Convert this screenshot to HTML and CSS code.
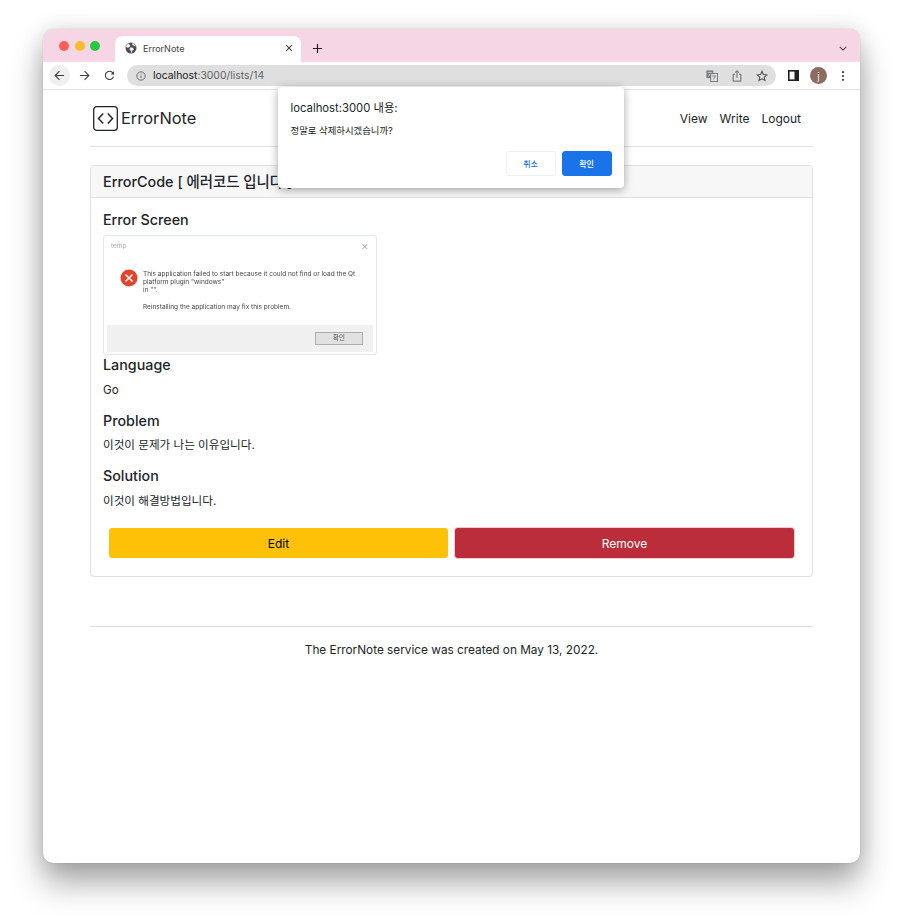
FILE: index.html
```html
<!DOCTYPE html>
<html lang="ko">
<head>
<meta charset="utf-8">
<title>ErrorNote</title>
<link rel="stylesheet" href="styles.css">
</head>
<body>
<div class="window">
  <div class="tabbar">
    <div class="lights"><i class="light red"></i><i class="light yellow"></i><i class="light green"></i></div>
    <div class="tab">
      <svg class="globe" viewBox="0 0 12 12"><circle cx="6" cy="6" r="5.5" fill="#4a4d51"/><path d="M3 1.6 5 3.4 4.4 5 2.6 5.4 1 4.4M6.5 11l.3-2.2 1.7-1.3-.7-1.6-2.2-.2-.8 1.5 1.2 1.6M8 .9 7.4 2.6 9 3.6 10.8 4" fill="#fff" stroke="#fff" stroke-width=".5"/></svg>
      <span class="tab-title">ErrorNote</span>
      <svg class="tab-close" viewBox="0 0 10 10"><path d="M1.5 1.5l7 7M8.500 1.500l-7 7" stroke="#3c3f43" stroke-width="1.300" fill="none"/></svg>
    </div>
    <svg class="new-tab" viewBox="0 0 12 12"><path d="M6 1v10M1 6h10" stroke="#202124" stroke-width="1.300" fill="none"/></svg>
    <svg class="tab-menu" viewBox="0 0 10 6"><path d="M1 1l4 4 4-4" stroke="#3c3f43" stroke-width="1.300" fill="none"/></svg>
  </div>
  <div class="toolbar">
    <div class="nav-btn back"><svg viewBox="0 0 12 12"><path d="M11 6H1.500M6 1.200 1.200 6 6 10.800" stroke="#3c3f43" stroke-width="1.200" fill="none"/></svg></div>
    <div class="nav-btn"><svg viewBox="0 0 12 12"><path d="M1 6h9.500M6 1.200 10.800 6 6 10.800" stroke="#3c3f43" stroke-width="1.200" fill="none"/></svg></div>
    <div class="nav-btn"><svg viewBox="0 0 12 12"><path d="M10.300 7.200A4.500 4.500 0 1 1 9.300 2.800L10.800 4.300" stroke="#3c3f43" stroke-width="1.200" fill="none"/><path d="M11 1v3.800H7.200z" fill="#3c3f43"/></svg></div>
    <div class="omnibox">
      <svg class="info" viewBox="0 0 12 12"><circle cx="6" cy="6" r="5" stroke="#5f6368" stroke-width="1.100" fill="none"/><path d="M6 5.300v3.300M6 3.300v1" stroke="#5f6368" stroke-width="1.100"/></svg>
      <span class="url"><span class="host">localhost</span>:3000/lists/14</span>
      <svg class="omni-icon translate" viewBox="0 0 14 14"><rect x=".5" y=".5" width="8" height="9" fill="#7a7d80"/><path d="M2 3h5M4.500 2v1M6 3.200c-.6 2-2 3.400-3.500 4M3.300 4.500c.7 1.300 1.900 2.300 3.200 2.700" stroke="#e8e8e8" stroke-width=".7" fill="none"/><rect x="5.500" y="4" width="8" height="9.500" fill="#dedede" stroke="#6a6d70"/><path d="M7.500 7h4M8.500 10.500c1.500-.5 2-2 2-3" stroke="#6a6d70" fill="none"/></svg>
      <svg class="omni-icon share" viewBox="0 0 12 14"><path d="M3.500 5H1.500v8h9V5H8.500M6 9V1M3.500 3.200 6 .8l2.500 2.400" stroke="#5f6368" stroke-width="1.100" fill="none"/></svg>
      <svg class="omni-icon star" viewBox="0 0 14 14"><path d="M7 1.500 8.600 5.200l4 .4-3 2.700.9 3.900L7 10.200l-3.500 2 .9-3.900-3-2.700 4-.4z" stroke="#4a4d51" stroke-width="1.200" fill="none"/></svg>
    </div>
    <svg class="side-panel" viewBox="0 0 11 11"><rect x=".8" y=".8" width="9.400" height="9.400" fill="#fff" stroke="#202124" stroke-width="1.600"/><rect x="6.500" y="1" width="3.500" height="9" fill="#202124"/></svg>
    <div class="avatar">j</div>
    <svg class="kebab" viewBox="0 0 4 14"><circle cx="2" cy="2.500" r="1.300" fill="#3c3f43"/><circle cx="2" cy="7" r="1.300" fill="#3c3f43"/><circle cx="2" cy="11.500" r="1.300" fill="#3c3f43"/></svg>
  </div>
  <div class="page">
    <header class="site-header">
      <a class="brand">
        <svg class="brand-icon" viewBox="0 0 25 25"><rect x=".7" y=".7" width="23.600" height="23.600" rx="3" stroke="#212529" stroke-width="1.300" fill="none"/><path d="M10.200 7.500 5.500 12.500l4.700 5M14.800 7.500l4.700 5-4.700 5" stroke="#212529" stroke-width="1.500" fill="none"/></svg>
        <span>ErrorNote</span>
      </a>
      <nav class="site-nav"><a>View</a><a>Write</a><a>Logout</a></nav>
    </header>
    <section class="card">
      <h2 class="card-header">ErrorCode [ 에러코드 입니다 ]</h2>
      <div class="card-body">
        <h3 class="label">Error Screen</h3>
        <div class="shot">
          <div class="shot-inner">
            <div class="shot-title"><span>temp</span><span class="shot-x">✕</span></div>
            <div class="shot-msg">
              <svg class="shot-err" viewBox="0 0 18 18"><circle cx="9" cy="9" r="8.500" fill="#e2432a"/><path d="M5.500 5.500l7 7M12.500 5.500l-7 7" stroke="#fff" stroke-width="1.500"/></svg>
              <div class="shot-text">
                <p>This application failed to start because it could not find or load the Qt<br>platform plugin "windows"<br>in "".</p>
                <p class="shot-p2">Reinstalling the application may fix this problem.</p>
              </div>
            </div>
            <div class="shot-foot"><span class="shot-btn">확인</span></div>
          </div>
        </div>
        <h3 class="label">Language</h3>
        <p class="value">Go</p>
        <h3 class="label">Problem</h3>
        <p class="value">이것이 문제가 나는 이유입니다.</p>
        <h3 class="label">Solution</h3>
        <p class="value">이것이 해결방법입니다.</p>
        <div class="actions">
          <button class="btn btn-edit">Edit</button>
          <button class="btn btn-remove">Remove</button>
        </div>
      </div>
    </section>
    <footer class="site-footer">The ErrorNote service was created on May 13, 2022.</footer>
  </div>
  <div class="dialog">
    <div class="dialog-title">localhost:3000 내용:</div>
    <div class="dialog-msg">정말로 삭제하시겠습니까?</div>
    <div class="dialog-actions">
      <button class="dbtn dbtn-cancel">취소</button>
      <button class="dbtn dbtn-ok">확인</button>
    </div>
  </div>
</div>
</body>
</html>
```
FILE: styles.css
```css
* { box-sizing: border-box; }
html, body { margin: 0; padding: 0; height: 920px; overflow: hidden; background: #fff; }
body {
  padding: 29px 0 0 43px;
  font-family: Inter, "Noto Sans CJK KR", sans-serif;
  color: #212529;
}
.window {
  position: relative;
  width: 817px;
  height: 834px;
  border-radius: 10px;
  background: #fff;
  overflow: visible;
  box-shadow: 0 0 1px rgba(0,0,0,.3), 0 20px 32px rgba(0,0,0,.34), 0 0 22px rgba(0,0,0,.12);
}
.tabbar {
  height: 33px;
  background: #f6d5e5;
  border-radius: 10px 10px 0 0;
  display: flex;
  align-items: flex-end;
  position: relative;
}
.lights { display: flex; gap: 5.500px; padding: 0 0 11px 16px; width: 72px; }
.light { width: 10px; height: 10px; border-radius: 50%; display: block; flex: none; }
.red { background: #fc5f57; }
.yellow { background: #fdbc2e; }
.green { background: #28c840; }
.tab {
  width: 186px;
  height: 26px;
  background: #fff;
  border-radius: 8px 8px 0 0;
  display: flex;
  align-items: center;
  padding: 0 8px 2px 10px;
  font-size: 9px;
  color: #3c4043;
}
.globe { width: 12px; height: 12px; flex: none; }
.tab-title { margin-left: 6px; flex: 1; }
.tab-close { width: 8px; height: 8px; }
.new-tab { width: 11px; height: 11px; margin: 0 0 8px 11px; }
.tab-menu { position: absolute; right: 13px; top: 17px; width: 8px; height: 5px; }
.toolbar {
  height: 28px;
  display: flex;
  align-items: center;
  background: #fff;
  border-bottom: 1px solid #e3e3e3;
  padding: 0 0 0 6px;
}
.nav-btn { width: 21px; height: 21px; border-radius: 50%; display: flex; align-items: center; justify-content: center; margin-right: 4px; }
.nav-btn svg { width: 11px; height: 11px; }
.back { background: #efefef; }
.omnibox {
  width: 649px;
  height: 21px;
  margin-left: 3px;
  border-radius: 11px;
  background: #dfdfdf;
  display: flex;
  align-items: center;
  padding: 0 8px 0 9px;
  font-size: 10.400px;
  color: #5f6368;
}
.info { width: 10px; height: 10px; flex: none; }
.url { margin-left: 7px; flex: 1; }
.host { color: #202124; }
.omni-icon { flex: none; height: 12px; width: 12px; margin-left: 13px; }
.side-panel { width: 11px; height: 11px; margin-left: 12px; }
.avatar {
  width: 17px; height: 17px; border-radius: 50%;
  background: #8d6b5f; color: #f3e9e4;
  font-size: 10px; display: flex; align-items: center; justify-content: center;
  margin-left: 11px;
}
.kebab { width: 4px; height: 12px; margin-left: 14px; }
.page { padding: 0 47px; font-size: 12px; }
.site-header {
  height: 57px;
  border-bottom: 1px solid #dee2e6;
  display: flex;
  justify-content: space-between;
  align-items: center;
  padding: 0 12px 0 3px;
}
.brand { display: flex; align-items: center; gap: 3px; font-size: 16.400px; }
.brand-icon { width: 25px; height: 25px; }
.site-nav { display: flex; gap: 12px; font-size: 12px; }
.card {
  margin-top: 18px;
  border: 1px solid #e0e0e0;
  border-radius: 4px;
  height: 412px;
}
.card-header {
  margin: 0;
  height: 32px;
  padding: 0 12px;
  background: #f7f7f7;
  border-bottom: 1px solid #dfdfdf;
  border-radius: 4px 4px 0 0;
  font-size: 14.400px;
  font-weight: 500;
  line-height: 31px;
}
.card-body { padding: 13px 12px 0; }
.label { margin: 0; font-size: 14.300px; font-weight: 500; line-height: 18px; }
.value { margin: 6.500px 0 12px; font-size: 11.600px; line-height: 19px; }
.shot { width: 274px; height: 120px; margin: 6px 0 1px; border: 1px solid #e3e6e8; border-radius: 3px; padding: 1px 3px 1px 3px; overflow: hidden; }
.shot-inner { height: 100%; display: flex; flex-direction: column; filter: blur(.45px); }
.shot-title { display: flex; justify-content: space-between; font-size: 6.500px; color: #aaa; padding: 5px 4px 0 4px; }
.shot-x { font-size: 9px; line-height: 9px; }
.shot-msg { display: flex; flex: 1; padding: 17px 0 0 13px; gap: 5px; }
.shot-err { width: 18px; height: 18px; flex: none; margin-top: 1px; }
.shot-text { font-size: 6.500px; line-height: 8px; color: #444; margin-top: 2px; }
.shot-text p { margin: 0; }
.shot-text .shot-p2 { margin-top: 9px; }
.shot-foot { height: 27px; background: #f0f0f0; display: flex; align-items: center; justify-content: flex-end; padding-right: 10px; margin-bottom: 1px; }
.shot-btn { width: 48px; height: 13px; background: #e1e1e1; border: 1px solid #adadad; font-size: 6.500px; line-height: 11px; text-align: center; color: #555; }
.actions { display: flex; gap: 7px; padding: 0 6px; margin-top: 17.500px; }
.btn { flex: 1; height: 30px; border-radius: 3px; border: 1px solid transparent; font: inherit; font-size: 12px; }
.btn-edit { background: #ffc107; color: #000; }
.btn-remove { background: #bb2d3b; color: #fff; box-shadow: 0 0 0 1px rgba(187,45,59,.25); }
.site-footer {
  margin-top: 49px;
  border-top: 1px solid #dcdcdc;
  padding-top: 15px;
  text-align: center;
  font-size: 11.800px;
  line-height: 16px;
}
.dialog {
  position: absolute;
  left: 235px;
  top: 58px;
  width: 346px;
  height: 101px;
  background: #fff;
  border-radius: 4px;
  box-shadow: 0 2px 10px rgba(0,0,0,.35);
  padding: 14px 12.500px 0;
}
.dialog-title { font-size: 11.300px; line-height: 14px; }
.dialog-msg { font-size: 9.400px; line-height: 12px; margin-top: 10px; color: #202124; }
.dialog-actions { display: flex; justify-content: flex-end; gap: 6px; margin-top: 14px; }
.dbtn { width: 50px; height: 25px; border-radius: 3px; font: inherit; font-size: 8px; font-weight: 500; border: 1px solid #f0f0f0; }
.dbtn-cancel { background: #fff; color: #1a73e8; }
.dbtn-ok { background: #1a73e8; border-color: #1a73e8; color: #fff; }
```
